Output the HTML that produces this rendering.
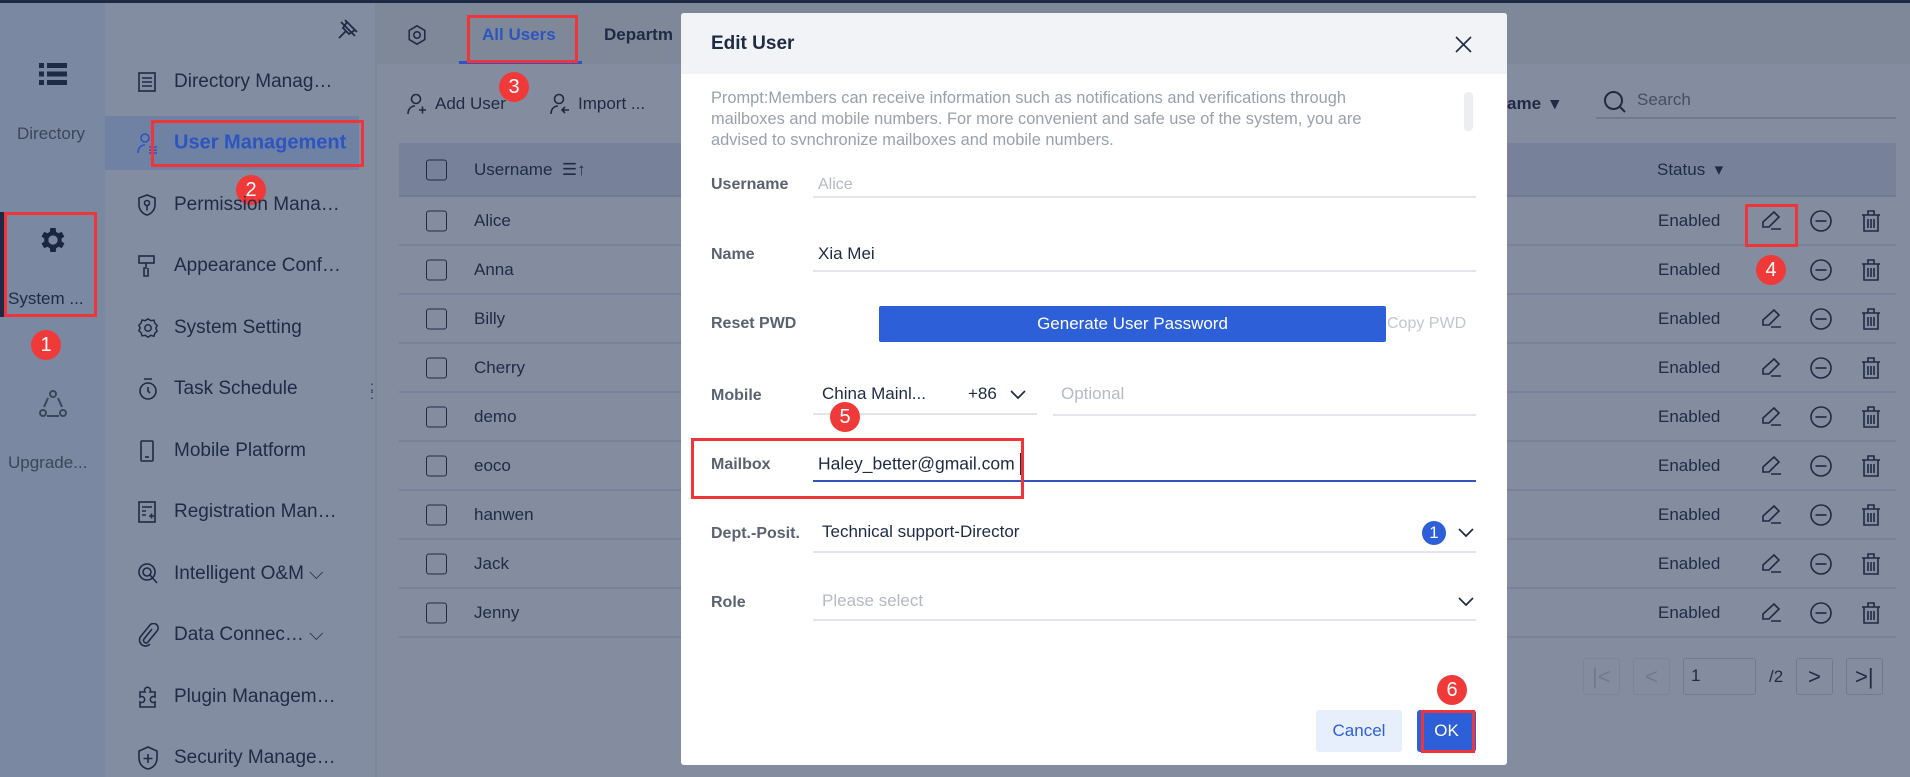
<!DOCTYPE html>
<html><head><meta charset="utf-8"><style>
*{margin:0;padding:0;box-sizing:border-box}
body{width:1910px;height:777px;overflow:hidden;position:relative;background:#848d9f;font-family:"Liberation Sans",sans-serif;color:#1f2a44}
.a{position:absolute}
.t{position:absolute;white-space:nowrap;transform:translateY(-50%)}
.badge{position:absolute;width:30px;height:30px;border-radius:50%;background:#f03a3a;color:#fff;font-size:20px;text-align:center;line-height:30px;transform:translate(-50%,-50%)}
.red{position:absolute;border:3px solid #f0353a}
.side{font-size:19px;color:#1f2a44}
.row{position:absolute;left:399px;width:1497px;height:49px;border-bottom:2px solid #76819a}
.cb{position:absolute;left:426px;width:21px;height:21px;border:1.5px solid #1f2a44;border-radius:3px;transform:translateY(-50%)}
.lbl{position:absolute;left:711px;font-size:16px;font-weight:bold;color:#5a6272;transform:translateY(-50%)}
.ul{position:absolute;height:2px;background:#e3e5ea}
.pg{position:absolute;top:658px;width:37px;height:37px;border:1.5px solid #6f7a8e;border-radius:3px}
</style></head><body>
<div class="a" style="left:0;top:0;width:1910px;height:3px;background:#1e2a44"></div>
<div class="a" style="left:0;top:3px;width:105px;height:774px;background:#7b88a1"></div>
<div class="a" style="left:0;top:212px;width:4px;height:105px;background:#1e2a44"></div>
<svg class="a" style="left:39px;top:62px" width="28" height="24" viewBox="0 0 28 24"><g fill="#1f2a44"><rect x="0" y="1" width="5" height="5"/><rect x="8" y="1" width="20" height="5"/><rect x="0" y="9.5" width="5" height="5"/><rect x="8" y="9.5" width="20" height="5"/><rect x="0" y="18" width="5" height="5"/><rect x="8" y="18" width="20" height="5"/></g></svg>
<div class="t" style="left:17px;top:134px;font-size:17px;color:#3b4659">Directory</div>
<svg class="a" style="left:37px;top:224px" width="32" height="32" viewBox="0 0 24 24"><path fill="#1a2540" d="M19.4 13a7.5 7.5 0 0 0 0-2l2.1-1.6-2-3.5-2.5 1a7 7 0 0 0-1.7-1L15 3h-4l-.4 2.9a7 7 0 0 0-1.7 1l-2.5-1-2 3.5L6.5 11a7.5 7.5 0 0 0 0 2l-2.1 1.6 2 3.5 2.5-1a7 7 0 0 0 1.7 1L11 21h4l.4-2.9a7 7 0 0 0 1.700-1l2.5 1 2-3.5zM13 15.5a3.5 3.5 0 1 1 0-7 3.5 3.5 0 0 1 0 7z" transform="translate(-1 0)"/></svg>
<div class="t" style="left:8px;top:299px;font-size:17px;color:#1f2a44">System ...</div>
<div class="red" style="left:4px;top:212px;width:93px;height:105px"></div>
<div class="badge" style="left:46px;top:345px">1</div>
<svg class="a" style="left:38px;top:390px" width="30" height="30" viewBox="0 0 30 30" fill="none" stroke="#3b4659" stroke-width="2"><circle cx="15" cy="4" r="3"/><circle cx="5" cy="23" r="3"/><circle cx="25" cy="23" r="3"/><path d="M10 8 6 17M20 8 24 17M9 26h12"/></svg>
<div class="t" style="left:8px;top:463px;font-size:17px;color:#3b4659">Upgrade...</div>
<div class="a" style="left:105px;top:3px;width:270px;height:774px;background:#838da1"></div>
<div class="a" style="left:375px;top:3px;width:2px;height:774px;background:#7d879a"></div>
<svg class="a" style="left:337px;top:18px" width="22" height="22" viewBox="0 0 22 22" fill="none" stroke="#1f2a44" stroke-width="1.8"><path d="M8 2l12 12M10 4 6 10l6 6 6-4M9 13l-7 7M4 4l14 14"/></svg>
<div class="a" style="left:105px;top:116px;width:254px;height:54px;background:#6f82a4"></div>
<div class="side">
<svg class="a" style="left:138px;top:72px" width="18" height="20" viewBox="0 0 18 20" fill="none" stroke="#1f2a44" stroke-width="1.6"><rect x="1" y="1" width="16" height="18"/><path d="M4 6h10M4 10h10M4 14h10"/></svg>
<div class="t" style="left:174px;top:82px">Directory Manag…</div>
<svg class="a" style="left:137px;top:132px" width="22" height="22" viewBox="0 0 22 22" fill="none" stroke="#2c55c0" stroke-width="1.6"><circle cx="8" cy="6" r="4"/><path d="M1 21c0-5 3-8 7-8M12 15h8M12 18h8M12 21h8"/></svg>
<div class="t" style="left:174px;top:143px;font-weight:bold;color:#2c55c0;font-size:20px">User Management</div>
<div class="red" style="left:151px;top:120px;width:213px;height:47px"></div>
<div class="badge" style="left:251px;top:190px">2</div>
<svg class="a" style="left:138px;top:194px" width="18" height="22" viewBox="0 0 18 22" fill="none" stroke="#1f2a44" stroke-width="1.6"><path d="M9 1 1 4v7c0 5 4 9 8 10 4-1 8-5 8-10V4z"/><circle cx="9" cy="9" r="2.5"/><path d="M9 11.5v5"/></svg>
<div class="t" style="left:174px;top:205px">Permission Mana…</div>
<svg class="a" style="left:138px;top:255px" width="18" height="22" viewBox="0 0 18 22" fill="none" stroke="#1f2a44" stroke-width="1.6"><rect x="1" y="1" width="15" height="7"/><path d="M8 8v5h-2v8h4v-8"/></svg>
<div class="t" style="left:174px;top:266px">Appearance Conf…</div>
<svg class="a" style="left:137px;top:317px" width="22" height="22" viewBox="0 0 24 24" fill="none" stroke="#1f2a44" stroke-width="1.6"><path d="M12 2l3 2 3.5-.5 1 3.3 2.5 2.5-1.5 3 1.5 3-2.5 2.5-1 3.3L15 20l-3 2-3-2-3.5.5-1-3.3L2 15l1.5-3L2 9l2.5-2.5 1-3.3L9 4z"/><circle cx="12" cy="12" r="3.5"/></svg>
<div class="t" style="left:174px;top:328px">System Setting</div>
<svg class="a" style="left:138px;top:378px" width="20" height="22" viewBox="0 0 20 22" fill="none" stroke="#1f2a44" stroke-width="1.6"><circle cx="10" cy="13" r="8"/><path d="M10 9v4l2 2M6 1h8"/></svg>
<div class="t" style="left:174px;top:389px">Task Schedule</div>
<div class="t" style="left:370px;top:390px;font-size:14px;letter-spacing:2px;line-height:8px;width:10px;white-space:normal;color:#1f2a44">: :</div>
<svg class="a" style="left:140px;top:440px" width="14" height="22" viewBox="0 0 14 22" fill="none" stroke="#1f2a44" stroke-width="1.6"><rect x="1" y="1" width="12" height="20" rx="1"/><path d="M5 17h4"/></svg>
<div class="t" style="left:174px;top:451px">Mobile Platform</div>
<svg class="a" style="left:138px;top:501px" width="18" height="22" viewBox="0 0 18 22" fill="none" stroke="#1f2a44" stroke-width="1.6"><rect x="1" y="1" width="16" height="20"/><path d="M4 6h10M4 10h4M4 14h4M11 15h5M13.5 12.5v5"/></svg>
<div class="t" style="left:174px;top:512px">Registration Man…</div>
<svg class="a" style="left:137px;top:562px" width="22" height="24" viewBox="0 0 22 24" fill="none" stroke="#1f2a44" stroke-width="1.6"><circle cx="10" cy="10" r="8"/><circle cx="10" cy="10" r="4"/><path d="M13 13l7 8"/></svg>
<div class="t" style="left:174px;top:574px">Intelligent O&amp;M ⌵</div>
<svg class="a" style="left:137px;top:623px" width="22" height="24" viewBox="0 0 22 24" fill="none" stroke="#1f2a44" stroke-width="1.6"><path d="M15 6 7 16a2.5 2.5 0 0 0 4 3l9-11a4.5 4.5 0 0 0-7-6L4 13a6 6 0 0 0 9 8"/></svg>
<div class="t" style="left:174px;top:635px">Data Connec… ⌵</div>
<svg class="a" style="left:137px;top:685px" width="22" height="24" viewBox="0 0 22 24" fill="none" stroke="#1f2a44" stroke-width="1.6"><path d="M3 7h5a3 3 0 1 1 5 0h5v5a3 3 0 1 0 0 5v5H3v-5a3 3 0 1 0 0-5z"/></svg>
<div class="t" style="left:174px;top:697px">Plugin Managem…</div>
<svg class="a" style="left:138px;top:746px" width="20" height="24" viewBox="0 0 20 24" fill="none" stroke="#1f2a44" stroke-width="1.6"><path d="M10 1 1 5v7c0 6 4 10 9 11 5-1 9-5 9-11V5z"/><path d="M10 8v9M5.5 12.5h9"/></svg>
<div class="t" style="left:174px;top:758px">Security Manage…</div>
</div>
<div class="a" style="left:377px;top:3px;width:1533px;height:61px;background:#7f8899"></div>
<svg class="a" style="left:406px;top:24px" width="22" height="22" viewBox="0 0 24 24" fill="none" stroke="#1f2a44" stroke-width="1.7"><path d="M12 2l8.5 5v10L12 22l-8.5-5V7z"/><circle cx="12" cy="12" r="3.5"/></svg>
<div class="t" style="left:482px;top:35px;font-size:17px;font-weight:bold;color:#2c55c0">All Users</div>
<div class="a" style="left:459px;top:61px;width:123px;height:3px;background:#2c55c0"></div>
<div class="red" style="left:467px;top:15px;width:111px;height:48px"></div>
<div class="t" style="left:604px;top:35px;font-size:17px;font-weight:bold;color:#1f2a44">Departm</div>
<div class="badge" style="left:514px;top:87px">3</div>
<svg class="a" style="left:407px;top:93px" width="20" height="22" viewBox="0 0 20 22" fill="none" stroke="#1f2a44" stroke-width="1.6"><circle cx="9" cy="6" r="4.5"/><path d="M1 21c0-5 3-8 7-8M12 17h7M15.5 13.5v7"/></svg>
<div class="t" style="left:435px;top:104px;font-size:17px">Add User</div>
<svg class="a" style="left:550px;top:93px" width="20" height="22" viewBox="0 0 20 22" fill="none" stroke="#1f2a44" stroke-width="1.6"><circle cx="9" cy="6" r="4.5"/><path d="M1 21c0-5 3-8 7-8M12 17h7M15 14l-3 3 3 3"/></svg>
<div class="t" style="left:578px;top:104px;font-size:17px">Import ...</div>
<div class="t" style="left:1507px;top:104px;font-size:17px;font-weight:bold">ame&nbsp;&nbsp;▾</div>
<svg class="a" style="left:1603px;top:90px" width="24" height="24" viewBox="0 0 24 24" fill="none" stroke="#1f2a44" stroke-width="2"><circle cx="10.5" cy="10.5" r="8.5"/><path d="M17 17l5 5"/></svg>
<div class="t" style="left:1637px;top:100px;font-size:17px;color:#454f62">Search</div>
<div class="a" style="left:1596px;top:117px;width:300px;height:2px;background:#6f7a8e"></div>
<div class="a" style="left:399px;top:143px;width:1497px;height:54px;background:#77829a;border-bottom:2px solid #6f7a8e"></div>
<div class="cb" style="top:170px"></div>
<div class="t" style="left:474px;top:170px;font-size:17px">Username&nbsp;&nbsp;☰↑</div>
<div class="t" style="left:1657px;top:170px;font-size:17px">Status&nbsp;&nbsp;▾</div>
<div id="rows"></div>
<script>
var names=["Alice","Anna","Billy","Cherry","demo","eoco","hanwen","Jack","Jenny"],h="";
names.forEach(function(n,i){var c=221+49*i;
h+='<div class="row" style="top:'+(c-24)+'px"></div><div class="cb" style="top:'+c+'px"></div><div class="t" style="left:474px;top:'+c+'px;font-size:17px">'+n+'</div><div class="t" style="left:1658px;top:'+c+'px;font-size:17px">Enabled</div>';
if(i!=1)h+='<svg class="a" style="left:1761px;top:'+(c-11)+'px" width="21" height="21" viewBox="0 0 21 21" fill="none" stroke="#1f2a44" stroke-width="1.6"><path d="M13 2l5 5-10 10H2v-5zM10 19h10"/></svg>';
h+='<svg class="a" style="left:1810px;top:'+(c-11)+'px" width="22" height="22" viewBox="0 0 22 22" fill="none" stroke="#1f2a44" stroke-width="1.6"><circle cx="11" cy="11" r="10"/><path d="M5.5 11h11"/></svg>';
h+='<svg class="a" style="left:1861px;top:'+(c-11)+'px" width="20" height="22" viewBox="0 0 20 22" fill="none" stroke="#1f2a44" stroke-width="1.6"><path d="M1 5h18M7 5V1h6v4M3 5v16h14V5M7 9v9M10 9v9M13 9v9"/></svg>';});
document.getElementById("rows").innerHTML=h;
</script>
<div class="red" style="left:1745px;top:204px;width:53px;height:43px"></div>
<div class="badge" style="left:1771px;top:270px">4</div>
<div class="pg" style="left:1583px;border-color:#7b8598"></div><div class="t" style="left:1592px;top:677px;font-size:22px;color:#6f7a8e">|&lt;</div>
<div class="pg" style="left:1633px;border-color:#7b8598"></div><div class="t" style="left:1645px;top:677px;font-size:22px;color:#6f7a8e">&lt;</div>
<div class="pg" style="left:1683px;width:73px"></div><div class="t" style="left:1691px;top:676px;font-size:17px">1</div>
<div class="t" style="left:1769px;top:677px;font-size:17px">/2</div>
<div class="pg" style="left:1796px"></div><div class="t" style="left:1808px;top:677px;font-size:22px">&gt;</div>
<div class="pg" style="left:1846px"></div><div class="t" style="left:1855px;top:677px;font-size:22px">&gt;|</div>
<div class="a" style="left:681px;top:13px;width:826px;height:752px;background:#fff;border-radius:3px"></div>
<div class="a" style="left:681px;top:13px;width:826px;height:61px;background:#f2f3f6;border-radius:3px 3px 0 0"></div>
<div class="t" style="left:711px;top:44px;font-size:19px;font-weight:bold;color:#1f2a44">Edit User</div>
<svg class="a" style="left:1455px;top:36px" width="17" height="17" viewBox="0 0 17 17" stroke="#1f2a44" stroke-width="1.6"><path d="M1 1l15 15M16 1 1 16"/></svg>
<div class="a" style="left:711px;top:88px;width:700px;height:57px;overflow:hidden;font-size:16.4px;line-height:21px;color:#9aa0ab">Prompt:Members can receive information such as notifications and verifications through mailboxes and mobile numbers. For more convenient and safe use of the system, you are advised to synchronize mailboxes and mobile numbers.</div>
<div class="a" style="left:1464px;top:92px;width:9px;height:39px;background:#eceef2;border-radius:4px"></div>
<div class="lbl" style="top:185px">Username</div>
<div class="t" style="left:818px;top:185px;font-size:16px;color:#b4b9c2">Alice</div>
<div class="ul" style="left:813px;top:196px;width:663px"></div>
<div class="lbl" style="top:255px">Name</div>
<div class="t" style="left:818px;top:254px;font-size:17px;color:#1f2a44">Xia Mei</div>
<div class="ul" style="left:813px;top:270px;width:663px"></div>
<div class="lbl" style="top:324px">Reset PWD</div>
<div class="a" style="left:879px;top:306px;width:507px;height:36px;background:#2d5fd9;border-radius:2px;color:#fff;font-size:17px;text-align:center;line-height:36px">Generate User Password</div>
<div class="t" style="left:1387px;top:324px;font-size:16px;color:#c2c6cd">Copy PWD</div>
<div class="lbl" style="top:396px">Mobile</div>
<div class="t" style="left:822px;top:394px;font-size:17px">China Mainl...</div>
<div class="t" style="left:968px;top:394px;font-size:17px">+86</div>
<svg class="a" style="left:1010px;top:390px" width="16" height="10" viewBox="0 0 16 10" fill="none" stroke="#1f2a44" stroke-width="1.7"><path d="M1 1l7 7 7-7"/></svg>
<div class="ul" style="left:813px;top:413px;width:224px"></div>
<div class="t" style="left:1061px;top:394px;font-size:17px;color:#b4b9c2">Optional</div>
<div class="ul" style="left:1053px;top:414px;width:423px"></div>
<div class="badge" style="left:845px;top:417px">5</div>
<div class="lbl" style="top:465px">Mailbox</div>
<div class="t" style="left:818px;top:464px;font-size:17.5px">Haley_better@gmail.com</div>
<div class="a" style="left:1020px;top:453px;width:1px;height:22px;background:#1f2a44"></div>
<div class="a" style="left:813px;top:480px;width:663px;height:2px;background:#3156b8"></div>
<div class="red" style="left:691px;top:438px;width:333px;height:61px"></div>
<div class="lbl" style="top:534px">Dept.-Posit.</div>
<div class="t" style="left:822px;top:532px;font-size:17px">Technical support-Director</div>
<div class="a" style="left:1422px;top:521px;width:24px;height:24px;border-radius:50%;background:#2d5fd9;color:#fff;font-size:17px;text-align:center;line-height:24px">1</div>
<svg class="a" style="left:1458px;top:528px" width="16" height="10" viewBox="0 0 16 10" fill="none" stroke="#1f2a44" stroke-width="1.7"><path d="M1 1l7 7 7-7"/></svg>
<div class="ul" style="left:813px;top:551px;width:663px"></div>
<div class="lbl" style="top:603px">Role</div>
<div class="t" style="left:822px;top:601px;font-size:17px;color:#b4b9c2">Please select</div>
<svg class="a" style="left:1458px;top:597px" width="16" height="10" viewBox="0 0 16 10" fill="none" stroke="#1f2a44" stroke-width="1.7"><path d="M1 1l7 7 7-7"/></svg>
<div class="ul" style="left:813px;top:619px;width:663px"></div>
<div class="a" style="left:1316px;top:710px;width:86px;height:42px;background:#e8effc;border-radius:3px;color:#2d5fd9;font-size:17px;text-align:center;line-height:42px">Cancel</div>
<div class="a" style="left:1417px;top:710px;width:59px;height:42px;background:#2d5fd9;border-radius:3px;color:#fff;font-size:17px;text-align:center;line-height:42px">OK</div>
<div class="red" style="left:1421px;top:710px;width:54px;height:43px"></div>
<div class="badge" style="left:1452px;top:690px">6</div>
</body></html>
